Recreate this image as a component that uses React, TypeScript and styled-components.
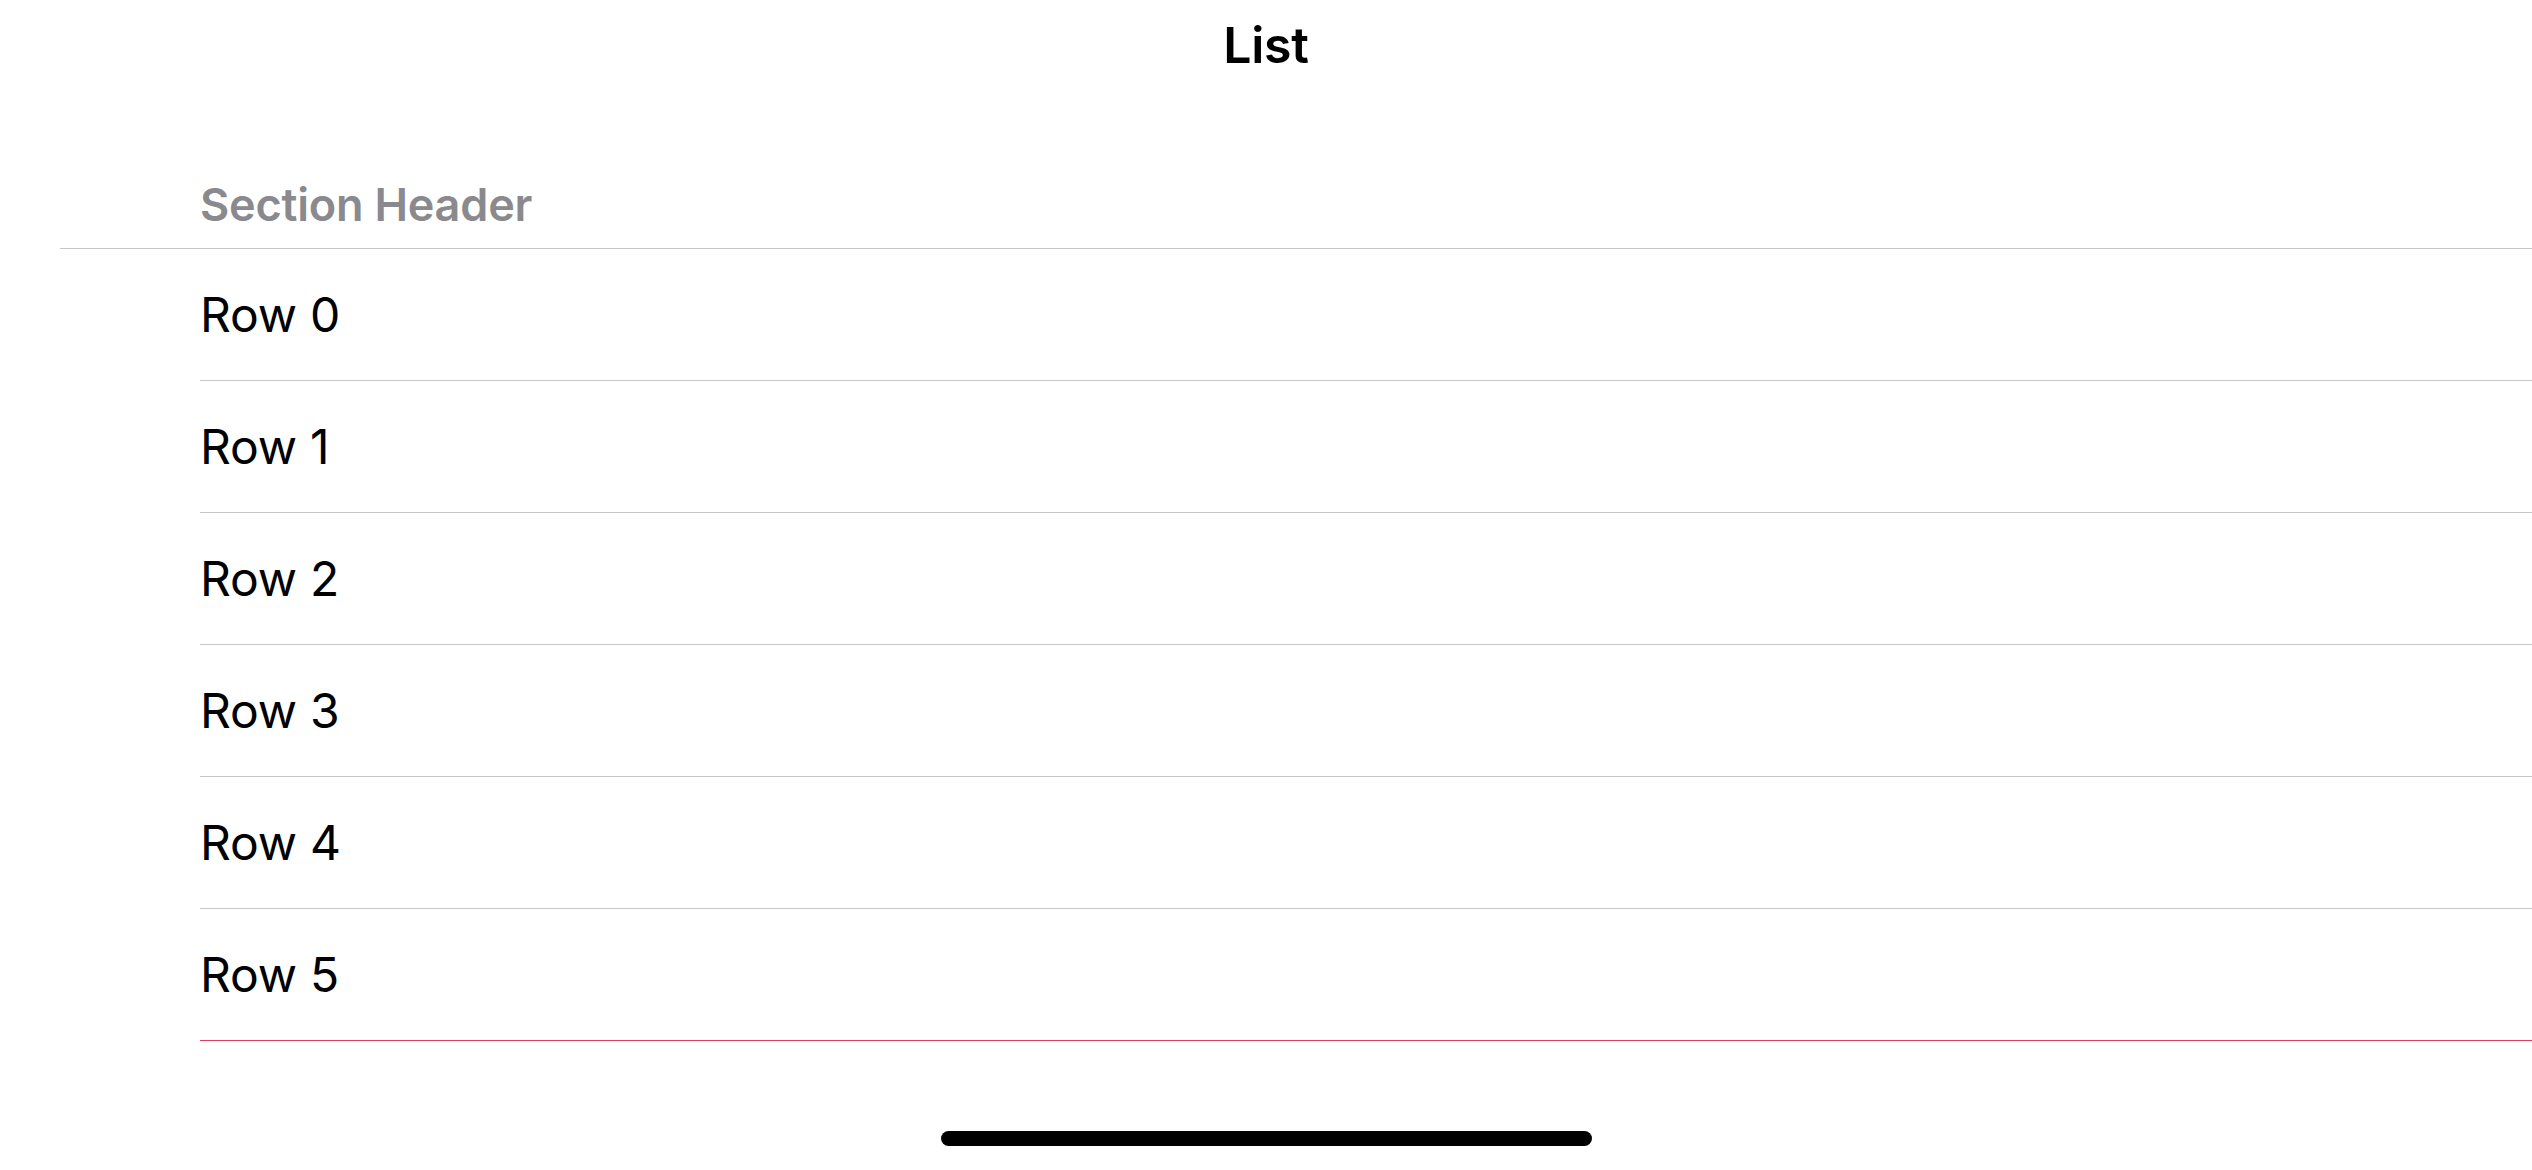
import React from "react";
import styled, { createGlobalStyle } from "styled-components";

const Global = createGlobalStyle`
  html, body { margin: 0; padding: 0; background: #ffffff; }
  body { font-family: Inter, "Noto Sans", "Liberation Sans", sans-serif; -webkit-font-smoothing: antialiased; }
`;

const Screen = styled.div`
  width: 2532px;
  height: 1170px;
  display: flex;
  flex-direction: column;
  background: #ffffff;
  overflow: hidden;
`;

const NavBar = styled.header`
  height: 90px;
  display: flex;
  align-items: center;
  justify-content: center;
  flex-shrink: 0;
`;

const Title = styled.h1`
  margin: 0;
  font-size: 50px;
  font-weight: 600;
  line-height: 60px;
  color: #000000;
  letter-spacing: -0.3px;
`;

const SectionHeader = styled.div`
  height: 159px;
  margin-left: 60px;
  padding-left: 140px;
  padding-bottom: 13px;
  box-sizing: border-box;
  display: flex;
  align-items: flex-end;
  border-bottom: 1px solid #c6c6c8;
  flex-shrink: 0;
`;

const HeaderText = styled.span`
  font-size: 45px;
  font-weight: 600;
  line-height: 60px;
  color: #8a8a8e;
  letter-spacing: -0.2px;
`;

const List = styled.ul`
  list-style: none;
  margin: 0;
  padding: 0;
`;

const Row = styled.li<{ $last?: boolean }>`
  height: 132px;
  margin-left: 200px;
  box-sizing: border-box;
  display: flex;
  align-items: center;
  padding-top: 1px;
  border-bottom: 1px solid ${(p) => (p.$last ? "#dd3d5e" : "#c6c6c8")};
`;

const RowText = styled.span`
  font-size: 48px;
  font-weight: 400;
  line-height: 60px;
  color: #000000;
  letter-spacing: -0.2px;
`;

const Spacer = styled.div`
  flex: 1;
`;

const HomeIndicator = styled.div`
  width: 651px;
  height: 15px;
  border-radius: 8px;
  background: #000000;
  align-self: center;
  margin-bottom: 24px;
  margin-left: 1px;
  flex-shrink: 0;
`;

const rows = [0, 1, 2, 3, 4, 5];

export default function App() {
  return (
    <>
      <Global />
      <Screen>
        <NavBar>
          <Title>List</Title>
        </NavBar>
        <SectionHeader>
          <HeaderText>Section Header</HeaderText>
        </SectionHeader>
        <List>
          {rows.map((r, i) => (
            <Row key={r} $last={i === rows.length - 1}>
              <RowText>Row {r}</RowText>
            </Row>
          ))}
        </List>
        <Spacer />
        <HomeIndicator />
      </Screen>
    </>
  );
}
